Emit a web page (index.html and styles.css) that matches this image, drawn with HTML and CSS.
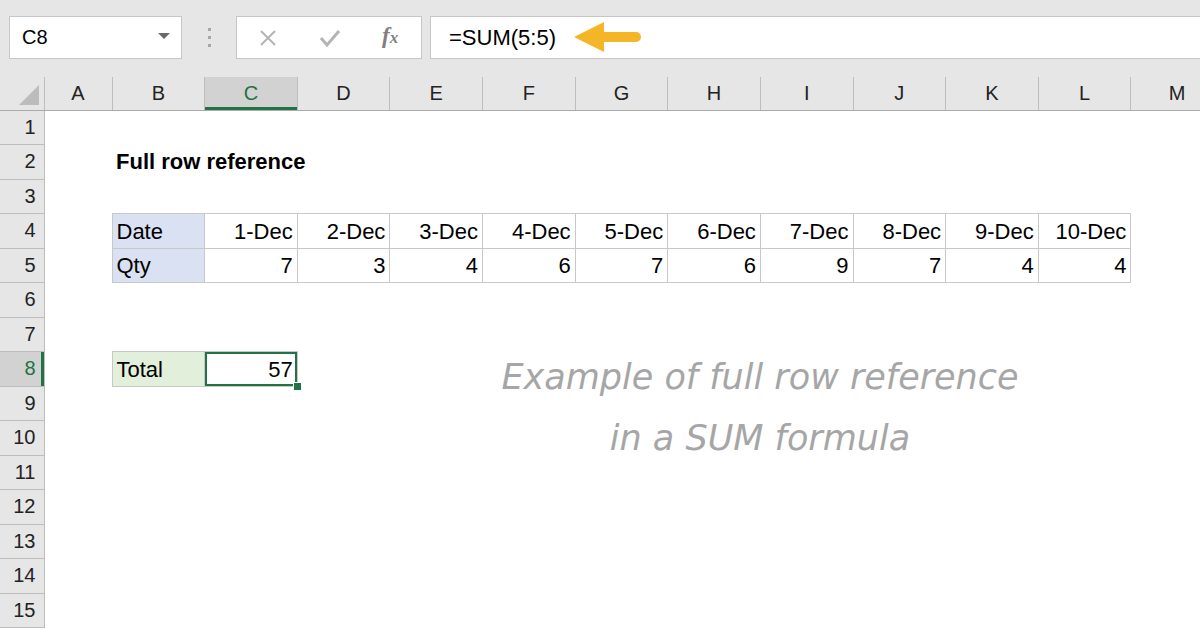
FILE: index.html
```html
<!DOCTYPE html>
<html lang="en">
<head>
    <meta charset="UTF-8">
    <meta name="viewport" content="width=device-width, initial-scale=1.0">
    <title>Full row reference</title>
    <link rel="stylesheet" href="styles.css">
</head>
<body>

<div class="toolbar">
    <div class="name-box">
        <span>C8</span>
        <span class="caret"></span>
    </div>
    <div class="grip"><i></i><i></i><i></i></div>
    <div class="fx-buttons">
        <svg class="btn-x" width="20" height="20" viewBox="0 0 20 20">
            <path d="M3 3 L17 17 M17 3 L3 17" stroke="#b4b4b4" stroke-width="2" fill="none"/>
        </svg>
        <svg class="btn-ok" width="22" height="20" viewBox="0 0 22 20">
            <path d="M2 10 L8 17 L20 3" stroke="#b4b4b4" stroke-width="3" fill="none"/>
        </svg>
        <span class="btn-fx">f<small>x</small></span>
    </div>
    <div class="formula">
        <span>=SUM(5:5)</span>
        <svg class="arrow" width="68" height="32" viewBox="0 0 68 32">
            <path d="M0 16 L30 1 L30 11 L62 11 A5 5 0 0 1 62 21 L30 21 L30 31 Z" fill="#f4b626"/>
        </svg>
    </div>
</div>

<div class="sheet">
    <table class="grid">
        <colgroup>
            <col class="c-hdr">
            <col class="c-a">
            <col class="c-n"><col class="c-n"><col class="c-n"><col class="c-n">
            <col class="c-n"><col class="c-n"><col class="c-n"><col class="c-n">
            <col class="c-n"><col class="c-n"><col class="c-n">
            <col class="c-n">
        </colgroup>
        <tr class="col-heads">
            <th class="corner"><span class="tri"></span></th>
            <th>A</th><th>B</th><th class="active">C</th><th>D</th><th>E</th><th>F</th>
            <th>G</th><th>H</th><th>I</th><th>J</th><th>K</th><th>L</th><th>M</th>
        </tr>
        <tr><th>1</th><td colspan="13"></td></tr>
        <tr><th>2</th><td></td><td class="title" colspan="3">Full row reference</td><td colspan="9"></td></tr>
        <tr><th>3</th><td colspan="13"></td></tr>
        <tr>
            <th>4</th><td></td>
            <td class="b lbl-blue">Date</td>
            <td class="b num">1-Dec</td><td class="b num">2-Dec</td><td class="b num">3-Dec</td>
            <td class="b num">4-Dec</td><td class="b num">5-Dec</td><td class="b num">6-Dec</td>
            <td class="b num">7-Dec</td><td class="b num">8-Dec</td><td class="b num">9-Dec</td>
            <td class="b num">10-Dec</td><td></td>
        </tr>
        <tr>
            <th>5</th><td></td>
            <td class="b lbl-blue">Qty</td>
            <td class="b num">7</td><td class="b num">3</td><td class="b num">4</td>
            <td class="b num">6</td><td class="b num">7</td><td class="b num">6</td>
            <td class="b num">9</td><td class="b num">7</td><td class="b num">4</td>
            <td class="b num">4</td><td></td>
        </tr>
        <tr><th>6</th><td colspan="13"></td></tr>
        <tr><th>7</th><td colspan="13"></td></tr>
        <tr>
            <th class="active-row">8</th><td></td>
            <td class="b lbl-green">Total</td>
            <td class="b num sel">57<span class="handle"></span></td>
            <td colspan="10"></td>
        </tr>
        <tr><th>9</th><td colspan="13"></td></tr>
        <tr><th>10</th><td colspan="13"></td></tr>
        <tr><th>11</th><td colspan="13"></td></tr>
        <tr><th>12</th><td colspan="13"></td></tr>
        <tr><th>13</th><td colspan="13"></td></tr>
        <tr><th>14</th><td colspan="13"></td></tr>
        <tr><th>15</th><td colspan="13"></td></tr>
    </table>

    <!-- text box on top of the sheet -->
    <div class="note">Example of full row reference<br>in a SUM formula</div>
</div>

</body>
</html>
```

FILE: styles.css
```css
body {
    margin: 0;
    padding: 0;
    width: 1200px;
    height: 630px;
    overflow: hidden;
    background-color: #ffffff;
    font-family: "Liberation Sans", Arial, sans-serif;
    color: #000;
}

/* 名稱方塊與公式列 */
.toolbar {
    display: flex;
    align-items: center;
    height: 77px;
    box-sizing: border-box;
    padding: 16px 0 18px 9px;
    background-color: #e6e6e6;
}
.name-box {
    display: flex;
    align-items: center;
    justify-content: space-between;
    width: 173px;
    height: 43px;
    box-sizing: border-box;
    padding: 0 11px 0 12px;
    background-color: #fff;
    border: 1px solid #c6c6c6;
    font-size: 20px;
}
.name-box .caret {
    width: 0;
    height: 0;
    border-left: 6px solid transparent;
    border-right: 6px solid transparent;
    border-top: 6px solid #6a6a6a;
    margin-bottom: 4px;
}
.grip {
    width: 54px;
    display: flex;
    flex-direction: column;
    align-items: center;
    gap: 5px;
}
.grip i {
    display: block;
    width: 3px;
    height: 3px;
    background-color: #a6a6a6;
}
.fx-buttons {
    display: flex;
    align-items: center;
    width: 186px;
    height: 43px;
    box-sizing: border-box;
    background-color: #fff;
    border: 1px solid #c6c6c6;
    padding-left: 21px;
}
.fx-buttons .btn-x {
    margin-right: 41px;
}
.fx-buttons .btn-ok {
    margin-right: 41px;
}
.btn-fx {
    font-family: "Liberation Serif", "Times New Roman", serif;
    font-style: italic;
    font-weight: bold;
    font-size: 23px;
    color: #808080;
    margin-top: -4px;
}
.btn-fx small {
    font-size: 17px;
}
.formula {
    flex: 1;
    display: flex;
    align-items: center;
    height: 43px;
    box-sizing: border-box;
    margin-left: 8px;
    margin-right: -2px;
    padding-left: 18px;
    background-color: #fff;
    border: 1px solid #c6c6c6;
    font-size: 22px;
}
.formula .arrow {
    margin-left: 18px;
    margin-top: -2px;
}

/* 工作表 */
.sheet {
    position: relative;
    width: 1200px;
    overflow: hidden;
}
.grid {
    table-layout: fixed;
    border-collapse: collapse;
    width: 1224px;
    font-size: 22px;
}
.c-hdr { width: 44px; }
.c-a { width: 68px; }
.c-n { width: 92.64px; }

.grid tr {
    height: 34.5px;
}
.grid tr.col-heads {
    height: 33px;
}
.grid th {
    background-color: #e6e6e6;
    font-weight: normal;
    font-size: 20px;
    color: #222;
    padding: 0;
    border-right: 1px solid #bdbdbd;
    border-bottom: 1px solid #bdbdbd;
    text-align: center;
}
.grid tr th:first-child {
    text-align: right;
    padding-right: 8px;
}
.grid .col-heads th {
    text-align: center;
    padding: 0;
    border-bottom: 1px solid #ababab;
}
.grid .col-heads th.corner {
    position: relative;
}
.corner .tri {
    position: absolute;
    right: 5px;
    bottom: 5px;
    width: 0;
    height: 0;
    border-left: 20px solid transparent;
    border-bottom: 20px solid #bcbcbc;
}
.grid th.active {
    background-color: #d2d2d2;
    color: #217346;
    box-shadow: inset 0 -3px 0 #217346;
}
.grid th.active-row {
    background-color: #d2d2d2;
    color: #217346;
    box-shadow: inset -3px 0 0 #217346;
}
.grid td {
    padding: 0 4px 3px 4px;
    vertical-align: bottom;
    white-space: nowrap;
    overflow: visible;
}
.grid td.title {
    font-weight: bold;
    font-size: 22px;
    padding-bottom: 4px;
}
.grid td.b {
    border: 1px solid #c8c8c8;
}
.grid td.num {
    text-align: right;
}
.lbl-blue {
    background-color: #d9e1f2;
}
.lbl-green {
    background-color: #e2efda;
}
.grid td.sel {
    position: relative;
    border: 1px solid #c8c8c8;
    box-shadow: inset 0 0 0 2px #217346, 0 0 0 1px #217346;
}
.sel .handle {
    position: absolute;
    right: -5px;
    bottom: -5px;
    width: 7px;
    height: 7px;
    background-color: #217346;
    border: 1px solid #fff;
}

/* 文字方塊 */
.note {
    position: absolute;
    left: 460px;
    top: 270px;
    width: 600px;
    text-align: center;
    font-family: "DejaVu Sans", sans-serif;
    font-style: italic;
    font-weight: 300;
    font-size: 35px;
    line-height: 61px;
    color: #a6a6a6;
}
```
